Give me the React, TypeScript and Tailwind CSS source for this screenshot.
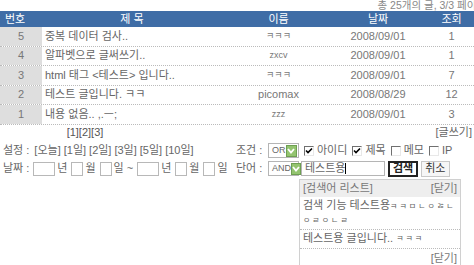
import React from 'react';

const rows = [
  { no: 5, title: '중복 데이터 검사..', name: 'ㅋㅋㅋ', small: true, date: '2008/09/01', hit: 1 },
  { no: 4, title: '알파벳으로 글써쓰기..', name: 'zxcv', small: true, date: '2008/09/01', hit: 1 },
  { no: 3, title: 'html 태그 <테스트> 입니다..', name: 'ㅋㅋㅋ', small: true, date: '2008/09/01', hit: 7 },
  { no: 2, title: '테스트 글입니다. ㅋㅋ', name: 'picomax', small: false, date: '2008/08/29', hit: 12 },
  { no: 1, title: '내용 없음.. ,.ㅡ;', name: 'zzz', small: true, date: '2008/09/01', hit: 3 },
];

const Check = ({ checked }: { checked: boolean }) => (
  <span className="inline-flex w-[10px] h-[10px] border-t border-l border-t-[#707070] border-l-[#707070] border-b border-r border-b-[#e8e8e8] border-r-[#e8e8e8] bg-white items-center justify-center">
    {checked && (
      <svg width="8" height="8" viewBox="0 0 8 8">
        <polyline points="1,3.5 3,5.5 7,1.5" fill="none" stroke="#000" strokeWidth="1.6" />
      </svg>
    )}
  </span>
);

const Select = ({ value }: { value: string }) => (
  <span className="inline-flex items-center w-[31px] h-[15px] border border-[#b5b5b5] bg-white">
    <span className="flex-1 pl-[3px] text-[9px] text-[#666] leading-none">{value}</span>
    <span className="w-[12px] h-[12px] mr-[1px] bg-[#93c46f] border border-[#6e9f52] flex items-center justify-center">
      <svg width="8" height="6" viewBox="0 0 8 6">
        <polyline points="1,1 4,4.5 7,1" fill="none" stroke="#fff" strokeWidth="1.8" />
      </svg>
    </span>
  </span>
);

const Box = ({ w }: { w: string }) => <span className={`inline-block h-[14px] border border-[#b8b8b8] bg-white ${w}`} />;

export default function App() {
  return (
    <div
      className="w-[482px] text-[11px] text-[#666] leading-none"
      style={{ fontFamily: '"Liberation Sans", "Noto Sans CJK KR", sans-serif' }}
    >
      <div className="text-right h-[11px] pt-[0px] mr-[-4px] text-[#888] text-[10.5px]">총 25개의 글, 3/3 페이지</div>

      <div className="grid grid-cols-[42px_180px_113px_86px_61px] h-[16px] bg-[#3f6da6] text-white text-[11px] items-center">
        <div className="pl-[5px]">번호</div>
        <div className="text-center">제 목</div>
        <div className="text-center">이름</div>
        <div className="text-center">날짜</div>
        <div className="text-center">조회</div>
      </div>

      {rows.map((r) => (
        <div
          key={r.no}
          className="grid grid-cols-[42px_180px_113px_86px_61px] h-[19.5px] border-b border-dotted border-[#bbb] items-stretch"
        >
          <div className="bg-[#dedede] text-[#777] flex items-center justify-center">{r.no}</div>
          <div className="pl-[3px] flex items-center text-[#666]">{r.title}</div>
          <div className={`flex items-center justify-center text-[#777] ${r.small ? 'text-[9px]' : ''}`}>{r.name}</div>
          <div className="flex items-center justify-center text-[#777]">{r.date}</div>
          <div className="flex items-center justify-center text-[#777]">{r.hit}</div>
        </div>
      ))}

      <div className="flex items-center h-[14px] mt-[1px] pr-[10px]">
        <div className="w-[170px] text-center text-[#555]">[1][2][3]</div>
        <div className="flex-1 text-right">[글쓰기]</div>
      </div>

      <div className="flex mt-[2px]">
        <div className="w-[236px] pl-[3px]">
          <div className="h-[18px] flex items-center gap-[3px]">
            <span className="mr-[2px]">설정 :</span>
            <span>[오늘]</span>
            <span>[1일]</span>
            <span>[2일]</span>
            <span>[3일]</span>
            <span>[5일]</span>
            <span>[10일]</span>
          </div>
          <div className="h-[18px] flex items-center gap-[2px]">
            <span className="mr-[2px]">날짜 :</span>
            <Box w="w-[22px]" />
            <span>년</span>
            <Box w="w-[12px] ml-[2px]" />
            <span>월</span>
            <Box w="w-[12px] ml-[2px]" />
            <span>일 ~</span>
            <Box w="w-[22px] ml-[2px]" />
            <span>년</span>
            <Box w="w-[12px] ml-[2px]" />
            <span>월</span>
            <Box w="w-[12px] ml-[2px]" />
            <span>일</span>
          </div>
        </div>

        <div className="flex-1">
          <div className="h-[18px] flex items-center">
            <span className="w-[32px]">조건 :</span>
            <Select value="OR" />
            <span className="flex items-center gap-[3px] ml-[5px]">
              <Check checked />
              <span>아이디</span>
            </span>
            <span className="flex items-center gap-[3px] ml-[5px]">
              <Check checked />
              <span>제목</span>
            </span>
            <span className="flex items-center gap-[3px] ml-[5px]">
              <Check checked={false} />
              <span>메모</span>
            </span>
            <span className="flex items-center gap-[3px] ml-[5px]">
              <Check checked={false} />
              <span>IP</span>
            </span>
          </div>
          <div className="h-[18px] flex items-center">
            <span className="w-[32px]">단어 :</span>
            <Select value="AND" />
            <span className="ml-[2px] w-[84px] h-[15px] border border-[#b5b5b5] bg-white flex items-center pl-[3px] text-[#666]">
              테스트용<span className="inline-block w-px h-[11px] bg-black" />
            </span>
            <span className="ml-[3px] h-[16px] px-[3px] border-2 border-[#222] bg-white text-[#222] flex items-center font-bold">검색</span>
            <span className="ml-[3px] h-[16px] px-[3px] border border-[#c8c8c8] bg-[#f6f6f6] text-[#333] flex items-center">취소</span>
          </div>

          <div className="ml-[63px] w-[162px] mt-[1px] border border-[#d0d0d0] bg-white">
            <div className="h-[17px] bg-[#eeeeee] flex items-center justify-between px-[3px] text-[#777]">
              <span>[검색어 리스트]</span>
              <span>[닫기]</span>
            </div>
            <div className="px-[3px] pt-[2px] pb-[2px] border-b border-dotted border-[#bbb] leading-[12px] text-[#666]">
              검색 기능 테스트용<span className="text-[8px] tracking-[2px]">ㅋㅋㅁㄴㅇㅀㄴ</span>
              <br />
              <span className="text-[8px] tracking-[2px]">ㅇㄹㅇㄴㄹ</span>
            </div>
            <div className="px-[3px] h-[19px] flex items-center border-b border-dotted border-[#bbb] text-[#666]">
              테스트용 글입니다.. <span className="text-[8px] tracking-[2px] ml-[3px]">ㅋㅋㅋ</span>
            </div>
            <div className="px-[3px] h-[20px] flex items-center justify-end text-[#777]">[닫기]</div>
          </div>
        </div>
      </div>
    </div>
  );
}
